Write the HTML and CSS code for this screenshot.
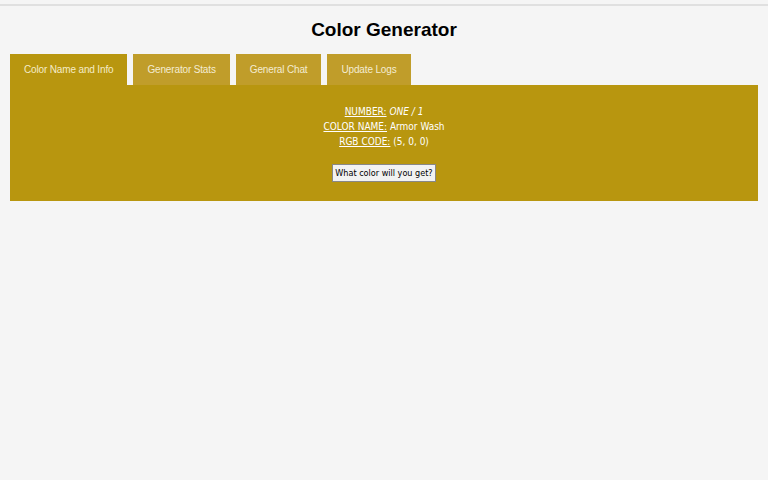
FILE: index.html
```html
<!DOCTYPE html>
<html>
<head>
<meta charset="utf-8">
<link rel="stylesheet" href="styles.css">
</head>
<body>
<div class="topline"></div>
<h1 class="title">Color Generator</h1>
<div class="tabs">
  <div class="tab active">Color Name and Info</div>
  <div class="tab">Generator Stats</div>
  <div class="tab">General Chat</div>
  <div class="tab">Update Logs</div>
</div>
<div class="panel">
  <div class="info">
    <div><span class="lbl">NUMBER:</span> <i>ONE / 1</i></div>
    <div><span class="lbl">COLOR NAME:</span> Armor Wash</div>
    <div><span class="lbl">RGB CODE:</span> (5, 0, 0)</div>
  </div>
  <button class="gen">What color will you get?</button>
</div>
</body>
</html>
```
FILE: styles.css
```css
html, body {
  margin: 0;
  padding: 0;
  background: #f5f5f5;
  font-family: "Liberation Sans", Arial, sans-serif;
}
.topline {
  height: 4px;
  border-bottom: 2px solid #e0e0e0;
}
.title {
  margin: 12px 0 0;
  height: 24px;
  line-height: 24px;
  text-align: center;
  font-size: 19px;
  font-weight: bold;
  color: #000;
}
.tabs {
  display: flex;
  gap: 6px;
  margin: 12px 10px 0;
}
.tab {
  height: 31px;
  line-height: 31px;
  padding: 0 14px;
  background: #c09d2a;
  color: #f4ecd2;
  font-size: 10px;
  letter-spacing: -0.15px;
}
.tab.active {
  background: #b8960f;
  color: #f5ecc8;
}
.panel {
  margin: 0 10px;
  background: #b8960f;
  height: 116px;
  display: flex;
  flex-direction: column;
  align-items: center;
  color: #fff;
  font-family: "DejaVu Sans Condensed", "DejaVu Sans", sans-serif;
  font-size: 10px;
}
.info {
  margin-top: 19px;
  line-height: 15px;
  text-align: center;
}
.lbl {
  text-decoration: underline;
}
.gen {
  margin-top: 15px;
  height: 18px;
  width: 104px;
  padding: 0;
  border: 1px solid #888;
  background: #f2f2f2;
  color: #000;
  font-family: "DejaVu Sans Condensed", "DejaVu Sans", sans-serif;
  font-size: 9px;
}
```
